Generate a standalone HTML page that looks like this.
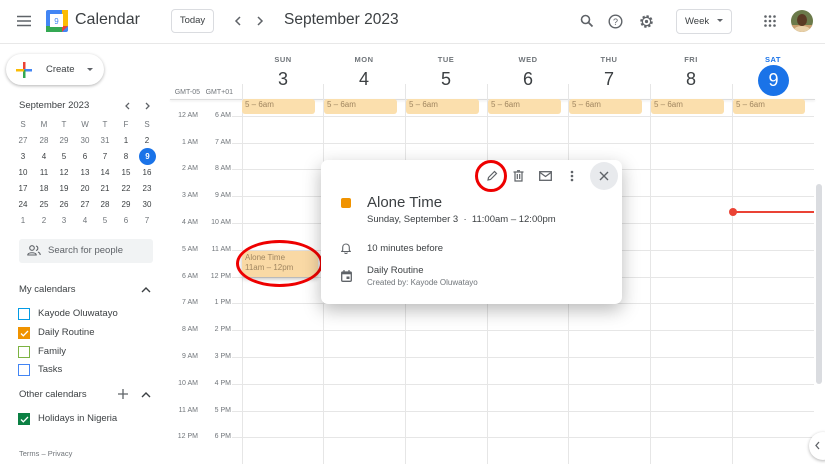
<!DOCTYPE html>
<html><head><meta charset="utf-8"><style>
*{box-sizing:border-box;margin:0;padding:0}
body{width:825px;height:464px;overflow:hidden;background:#fff;font-family:"Liberation Sans",Arial,sans-serif;color:#3c4043;position:relative}
.a{position:absolute}
.ic{position:absolute}
.mini span{position:absolute;width:20px;text-align:center;font-size:8px;color:#3c4043}
.lbl{position:absolute;font-size:7px;color:#70757a;text-align:right}
.hl{position:absolute;left:232px;width:582px;height:1px;background:#e6e6e6}
.vl{position:absolute;top:100px;width:1px;height:364px;background:#e6e6e6}
.ad{position:absolute;top:99px;height:15px;background:#fbdfad;border-radius:3px;font-size:8px;color:#a08660;padding:1px 3px}
.dn{position:absolute;top:55px;width:82px;text-align:center;font-size:7.5px;color:#70757a;font-weight:bold;letter-spacing:.5px}
.dd{position:absolute;top:69px;width:82px;text-align:center;font-size:18px;color:#3c4043}
.cb{position:absolute;left:18px;width:12px;height:12px;border:1.5px solid}
.cl{position:absolute;left:38px;font-size:9.5px;color:#3c4043}
</style></head><body>
<svg class="ic" style="left:17px;top:15px" width="14" height="12"><path d="M0 1.5h14M0 6h14M0 10.5h14" stroke="#5f6368" stroke-width="1.6"/></svg>
<svg class="ic" style="left:46px;top:10px" width="22" height="22" viewBox="0 0 22 22">
<rect x="0" y="0" width="22" height="22" rx="2" fill="#4285f4"/><rect x="16" y="0" width="6" height="16" fill="#fbbc04"/><rect x="0" y="16" width="16" height="6" fill="#34a853"/><path d="M16 16h6l-6 6z" fill="#ea4335"/><rect x="4" y="4" width="13" height="13" fill="#fff"/>
<text x="10.5" y="14" font-size="8" fill="#4285f4" text-anchor="middle" font-family="Liberation Sans">9</text></svg>
<div class="a" style="left:75px;top:11px;font-size:16px;color:#3c4043">Calendar</div>
<div class="a" style="left:171px;top:9px;width:43px;height:24px;border:1px solid #dadce0;border-radius:4px;font-size:9.5px;text-align:center;line-height:22px;color:#3c4043">Today</div>
<svg class="ic" style="left:234px;top:16px" width="8" height="10"><path d="M6 1L2 5l4 4" stroke="#5f6368" stroke-width="1.5" fill="none"/></svg>
<svg class="ic" style="left:256px;top:16px" width="8" height="10"><path d="M2 1l4 4-4 4" stroke="#5f6368" stroke-width="1.5" fill="none"/></svg>
<div class="a" style="left:284px;top:11px;font-size:15.5px;color:#3c4043">September 2023</div>
<svg class="ic" style="left:580px;top:14px" width="14" height="14"><circle cx="5.5" cy="5.5" r="4" stroke="#5f6368" stroke-width="1.6" fill="none"/><path d="M8.5 8.5l4 4" stroke="#5f6368" stroke-width="1.8"/></svg>
<svg class="ic" style="left:608px;top:14px" width="15" height="15"><circle cx="7.5" cy="7.5" r="6.3" stroke="#5f6368" stroke-width="1.4" fill="none"/><text x="7.5" y="11" font-size="9" text-anchor="middle" fill="#5f6368" font-family="Liberation Sans">?</text></svg>
<svg class="ic" style="left:639px;top:14px" width="15" height="15" viewBox="0 0 15 15"><circle cx="7.5" cy="7.5" r="5" stroke="#5f6368" stroke-width="2.6" stroke-dasharray="2.2 1.7" fill="none"/><circle cx="7.5" cy="7.5" r="4.2" stroke="#5f6368" stroke-width="1.3" fill="none"/><circle cx="7.5" cy="7.5" r="1.6" fill="#5f6368"/></svg>
<div class="a" style="left:676px;top:9px;width:56px;height:25px;border:1px solid #dadce0;border-radius:4px;font-size:9.5px;line-height:23px;padding-left:8px;color:#3c4043">Week</div>
<svg class="ic" style="left:717px;top:19px" width="6" height="4"><path d="M0 0h6L3 3z" fill="#5f6368"/></svg>
<svg class="ic" style="left:764px;top:15px" width="12" height="12"><g fill="#5f6368"><circle cx="1.5" cy="1.5" r="1.3"/><circle cx="6" cy="1.5" r="1.3"/><circle cx="10.5" cy="1.5" r="1.3"/><circle cx="1.5" cy="6" r="1.3"/><circle cx="6" cy="6" r="1.3"/><circle cx="10.5" cy="6" r="1.3"/><circle cx="1.5" cy="10.5" r="1.3"/><circle cx="6" cy="10.5" r="1.3"/><circle cx="10.5" cy="10.5" r="1.3"/></g></svg>
<svg class="ic" style="left:791px;top:10px" width="22" height="22"><defs><clipPath id="c"><circle cx="11" cy="11" r="11"/></clipPath></defs><g clip-path="url(#c)"><rect width="22" height="22" fill="#6b7a4a"/><rect y="15" width="22" height="7" fill="#c9a070"/><ellipse cx="11" cy="10" rx="5" ry="6" fill="#5a3a24"/><ellipse cx="11" cy="20" rx="8" ry="4" fill="#e8d0a8"/></g></svg>
<div class="a" style="left:0;top:43px;width:825px;height:1px;background:#e8e8e8"></div>

<div class="a" style="left:6px;top:54px;width:98px;height:31px;border-radius:16px;box-shadow:0 1px 3px rgba(0,0,0,.3);background:#fff"></div>
<svg class="ic" style="left:16px;top:62px" width="16" height="16"><rect x="7" y="0" width="2.5" height="8" fill="#ea4335"/><rect x="8" y="7" width="8" height="2.5" fill="#4285f4"/><rect x="7" y="8" width="2.5" height="8" fill="#34a853"/><rect x="0" y="7" width="8" height="2.5" fill="#fbbc04"/></svg>
<div class="a" style="left:46px;top:64px;font-size:9.5px;color:#3c4043">Create</div>
<svg class="ic" style="left:87px;top:68px" width="6" height="4"><path d="M0 0h6L3 3z" fill="#5f6368"/></svg>

<div class="a" style="left:19px;top:100px;font-size:9.5px;color:#3c4043">September 2023</div>
<svg class="ic" style="left:124px;top:102px" width="7" height="8"><path d="M5 1L2 4l3 3" stroke="#5f6368" stroke-width="1.3" fill="none"/></svg>
<svg class="ic" style="left:144px;top:102px" width="7" height="8"><path d="M2 1l3 3-3 3" stroke="#5f6368" stroke-width="1.3" fill="none"/></svg>
<div class="mini">
<span style="left:13px;top:120px;color:#70757a">S</span><span style="left:34px;top:120px;color:#70757a">M</span><span style="left:54px;top:120px;color:#70757a">T</span><span style="left:75px;top:120px;color:#70757a">W</span><span style="left:95px;top:120px;color:#70757a">T</span><span style="left:116px;top:120px;color:#70757a">F</span><span style="left:137px;top:120px;color:#70757a">S</span>
<span style="left:13px;top:136px;color:#70757a">27</span><span style="left:34px;top:136px;color:#70757a">28</span><span style="left:54px;top:136px;color:#70757a">29</span><span style="left:75px;top:136px;color:#70757a">30</span><span style="left:95px;top:136px;color:#70757a">31</span><span style="left:116px;top:136px">1</span><span style="left:137px;top:136px">2</span>
<span style="left:13px;top:152px">3</span><span style="left:34px;top:152px">4</span><span style="left:54px;top:152px">5</span><span style="left:75px;top:152px">6</span><span style="left:95px;top:152px">7</span><span style="left:116px;top:152px">8</span>
<span style="left:13px;top:168px">10</span><span style="left:34px;top:168px">11</span><span style="left:54px;top:168px">12</span><span style="left:75px;top:168px">13</span><span style="left:95px;top:168px">14</span><span style="left:116px;top:168px">15</span><span style="left:137px;top:168px">16</span>
<span style="left:13px;top:184px">17</span><span style="left:34px;top:184px">18</span><span style="left:54px;top:184px">19</span><span style="left:75px;top:184px">20</span><span style="left:95px;top:184px">21</span><span style="left:116px;top:184px">22</span><span style="left:137px;top:184px">23</span>
<span style="left:13px;top:200px">24</span><span style="left:34px;top:200px">25</span><span style="left:54px;top:200px">26</span><span style="left:75px;top:200px">27</span><span style="left:95px;top:200px">28</span><span style="left:116px;top:200px">29</span><span style="left:137px;top:200px">30</span>
<span style="left:13px;top:216px;color:#70757a">1</span><span style="left:34px;top:216px;color:#70757a">2</span><span style="left:54px;top:216px;color:#70757a">3</span><span style="left:75px;top:216px;color:#70757a">4</span><span style="left:95px;top:216px;color:#70757a">5</span><span style="left:116px;top:216px;color:#70757a">6</span><span style="left:137px;top:216px;color:#70757a">7</span>
</div>
<div class="a" style="left:139px;top:148px;width:17px;height:17px;border-radius:50%;background:#1a73e8;color:#fff;font-size:8px;font-weight:bold;text-align:center;line-height:17px">9</div>

<div class="a" style="left:19px;top:239px;width:134px;height:24px;background:#f1f3f4;border-radius:3px"></div>
<svg class="ic" style="left:27px;top:245px" width="14" height="11"><circle cx="5" cy="3" r="2.3" stroke="#5f6368" stroke-width="1.1" fill="none"/><path d="M0.8 10c0-3 8.4-3 8.4 0z" stroke="#5f6368" stroke-width="1.1" fill="none"/><path d="M9 1a2.3 2.3 0 010 4.5M11 7c1.5.6 2.2 1.5 2.2 3" stroke="#5f6368" stroke-width="1.1" fill="none"/></svg>
<div class="a" style="left:48px;top:245px;font-size:9.5px;color:#5f6368">Search for people</div>

<div class="a" style="left:19px;top:284px;font-size:9.5px;color:#3c4043">My calendars</div>
<svg class="ic" style="left:141px;top:286px" width="10" height="7"><path d="M1 6l4-4 4 4" stroke="#3c4043" stroke-width="1.4" fill="none"/></svg>
<div class="cb" style="top:308px;border-color:#039be5"></div><div class="cl" style="top:308px">Kayode Oluwatayo</div>
<div class="cb" style="top:327px;border-color:#f09300;background:#f09300"></div><svg class="ic" style="left:20px;top:330px" width="9" height="7"><path d="M1 3.5l2.3 2.3L8 1" stroke="#fff" stroke-width="1.3" fill="none"/></svg><div class="cl" style="top:327px">Daily Routine</div>
<div class="cb" style="top:346px;border-color:#7cb342"></div><div class="cl" style="top:346px">Family</div>
<div class="cb" style="top:364px;border-color:#4285f4"></div><div class="cl" style="top:364px">Tasks</div>
<div class="a" style="left:19px;top:389px;font-size:9.5px;color:#3c4043">Other calendars</div>
<svg class="ic" style="left:118px;top:389px" width="10" height="10"><path d="M5 0v10M0 5h10" stroke="#5f6368" stroke-width="1.3"/></svg>
<svg class="ic" style="left:141px;top:391px" width="10" height="7"><path d="M1 6l4-4 4 4" stroke="#3c4043" stroke-width="1.4" fill="none"/></svg>
<div class="cb" style="top:413px;border-color:#0b8043;background:#0b8043"></div><svg class="ic" style="left:20px;top:416px" width="9" height="7"><path d="M1 3.5l2.3 2.3L8 1" stroke="#fff" stroke-width="1.3" fill="none"/></svg><div class="cl" style="top:413px">Holidays in Nigeria</div>
<div class="a" style="left:19px;top:449px;font-size:7.5px;color:#70757a">Terms – Privacy</div>

<div class="dn" style="left:242px">SUN</div><div class="dd" style="left:242px">3</div>
<div class="dn" style="left:323px">MON</div><div class="dd" style="left:323px">4</div>
<div class="dn" style="left:405px">TUE</div><div class="dd" style="left:405px">5</div>
<div class="dn" style="left:487px">WED</div><div class="dd" style="left:487px">6</div>
<div class="dn" style="left:568px">THU</div><div class="dd" style="left:568px">7</div>
<div class="dn" style="left:650px">FRI</div><div class="dd" style="left:650px">8</div>
<div class="dn" style="left:732px;color:#1a73e8">SAT</div>
<div class="a" style="left:758px;top:65px;width:31px;height:31px;border-radius:50%;background:#1a73e8;color:#fff;font-size:18px;text-align:center;line-height:31px">9</div>
<div class="lbl" style="left:172px;top:89px;width:28px">GMT-05</div>
<div class="lbl" style="left:202px;top:89px;width:31px">GMT+01</div>
<div class="a" style="left:170px;top:99px;width:645px;height:1px;background:#ddd;box-shadow:0 1px 2px rgba(0,0,0,.12)"></div>

<div class="vl" style="left:242px;top:84px;height:380px"></div><div class="vl" style="left:323px;top:84px;height:380px"></div><div class="vl" style="left:405px;top:84px;height:380px"></div><div class="vl" style="left:487px;top:84px;height:380px"></div><div class="vl" style="left:568px;top:84px;height:380px"></div><div class="vl" style="left:650px;top:84px;height:380px"></div><div class="vl" style="left:732px;top:84px;height:380px"></div>

<div class="hl" style="top:116px"></div><div class="hl" style="top:143px"></div><div class="hl" style="top:169px"></div><div class="hl" style="top:196px"></div><div class="hl" style="top:223px"></div><div class="hl" style="top:250px"></div><div class="hl" style="top:277px"></div><div class="hl" style="top:303px"></div><div class="hl" style="top:330px"></div><div class="hl" style="top:357px"></div><div class="hl" style="top:384px"></div><div class="hl" style="top:411px"></div><div class="hl" style="top:437px"></div>

<div class="lbl" style="left:170px;top:112px;width:28px">12 AM</div><div class="lbl" style="left:200px;top:112px;width:31px">6 AM</div>
<div class="lbl" style="left:170px;top:139px;width:28px">1 AM</div><div class="lbl" style="left:200px;top:139px;width:31px">7 AM</div>
<div class="lbl" style="left:170px;top:165px;width:28px">2 AM</div><div class="lbl" style="left:200px;top:165px;width:31px">8 AM</div>
<div class="lbl" style="left:170px;top:192px;width:28px">3 AM</div><div class="lbl" style="left:200px;top:192px;width:31px">9 AM</div>
<div class="lbl" style="left:170px;top:219px;width:28px">4 AM</div><div class="lbl" style="left:200px;top:219px;width:31px">10 AM</div>
<div class="lbl" style="left:170px;top:246px;width:28px">5 AM</div><div class="lbl" style="left:200px;top:246px;width:31px">11 AM</div>
<div class="lbl" style="left:170px;top:273px;width:28px">6 AM</div><div class="lbl" style="left:200px;top:273px;width:31px">12 PM</div>
<div class="lbl" style="left:170px;top:299px;width:28px">7 AM</div><div class="lbl" style="left:200px;top:299px;width:31px">1 PM</div>
<div class="lbl" style="left:170px;top:326px;width:28px">8 AM</div><div class="lbl" style="left:200px;top:326px;width:31px">2 PM</div>
<div class="lbl" style="left:170px;top:353px;width:28px">9 AM</div><div class="lbl" style="left:200px;top:353px;width:31px">3 PM</div>
<div class="lbl" style="left:170px;top:380px;width:28px">10 AM</div><div class="lbl" style="left:200px;top:380px;width:31px">4 PM</div>
<div class="lbl" style="left:170px;top:407px;width:28px">11 AM</div><div class="lbl" style="left:200px;top:407px;width:31px">5 PM</div>
<div class="lbl" style="left:170px;top:433px;width:28px">12 PM</div><div class="lbl" style="left:200px;top:433px;width:31px">6 PM</div>

<div class="ad" style="left:242px;width:73px">5 – 6am</div><div class="ad" style="left:324px;width:73px">5 – 6am</div><div class="ad" style="left:406px;width:73px">5 – 6am</div><div class="ad" style="left:488px;width:73px">5 – 6am</div><div class="ad" style="left:569px;width:73px">5 – 6am</div><div class="ad" style="left:651px;width:73px">5 – 6am</div><div class="ad" style="left:733px;width:72px">5 – 6am</div>

<div class="a" style="left:242px;top:251px;width:76px;height:26px;background:#f9d9a5;border-radius:3px;box-shadow:0 2px 4px rgba(0,0,0,.25);font-size:8px;color:#a08660;padding:2px 3px;line-height:10px">Alone Time<br>11am – 12pm</div>
<div class="a" style="left:236px;top:240px;width:87px;height:47px;border:3.5px solid #e00;border-radius:50%"></div>

<div class="a" style="left:732px;top:211px;width:82px;height:1.5px;background:#ea4335"></div>
<div class="a" style="left:729px;top:208px;width:8px;height:8px;border-radius:50%;background:#ea4335"></div>

<div class="a" style="left:816px;top:184px;width:6px;height:200px;background:#dadce0;border-radius:3px"></div>
<div class="a" style="left:809px;top:432px;width:28px;height:28px;border-radius:50%;background:#fff;box-shadow:0 1px 3px rgba(0,0,0,.3)"></div>
<svg class="ic" style="left:814px;top:441px" width="7" height="9"><path d="M5 1L2 4.5 5 8" stroke="#5f6368" stroke-width="1.3" fill="none"/></svg>

<div class="a" style="left:321px;top:160px;width:301px;height:144px;background:#fff;border-radius:7px;box-shadow:0 6px 18px rgba(0,0,0,.28)"></div>
<svg class="ic" style="left:486px;top:170px" width="12" height="12"><path d="M2 10l.5-2.5L8.5 1.5l2 2L4.5 9.5z" stroke="#5f6368" stroke-width="1.2" fill="none"/></svg>
<div class="a" style="left:475px;top:160px;width:32px;height:32px;border:3.5px solid #e00;border-radius:50%"></div>
<svg class="ic" style="left:513px;top:170px" width="11" height="12"><path d="M0.5 2h10M4 0.7h3M2 2v9h7V2M4.3 4v5M6.7 4v5" stroke="#5f6368" stroke-width="1.2" fill="none"/></svg>
<svg class="ic" style="left:539px;top:171px" width="13" height="10"><rect x="0.7" y="0.7" width="11.6" height="8.6" stroke="#5f6368" stroke-width="1.3" fill="none"/><path d="M1 1.5l5.5 4 5.5-4" stroke="#5f6368" stroke-width="1.2" fill="none"/></svg>
<svg class="ic" style="left:570px;top:170px" width="4" height="12"><g fill="#5f6368"><circle cx="2" cy="2" r="1.3"/><circle cx="2" cy="6" r="1.3"/><circle cx="2" cy="10" r="1.3"/></g></svg>
<div class="a" style="left:590px;top:162px;width:28px;height:28px;border-radius:50%;background:#e8eaed"></div>
<svg class="ic" style="left:599px;top:171px" width="10" height="10"><path d="M1 1l8 8M9 1L1 9" stroke="#5f6368" stroke-width="1.4"/></svg>
<div class="a" style="left:341px;top:198px;width:10px;height:10px;border-radius:2px;background:#f09300"></div>
<div class="a" style="left:367px;top:194px;font-size:15px;color:#3c4043">Alone Time</div>
<div class="a" style="left:367px;top:214px;font-size:9.5px;color:#3c4043">Sunday, September 3 &nbsp;·&nbsp; 11:00am – 12:00pm</div>
<svg class="ic" style="left:341px;top:243px" width="10" height="11"><path d="M5 1c-2.3 0-3.3 1.7-3.3 3.5v2.8L.7 8.5h8.6L8.3 7.3V4.5C8.3 2.7 7.3 1 5 1zM3.8 9.5a1.2 1.2 0 002.4 0" stroke="#5f6368" stroke-width="1.1" fill="none"/></svg>
<div class="a" style="left:367px;top:243px;font-size:9.5px;color:#3c4043">10 minutes before</div>
<svg class="ic" style="left:341px;top:270px" width="11" height="12"><rect x="0.7" y="2" width="9.6" height="9.3" rx="1" stroke="#5f6368" stroke-width="1.3" fill="none"/><rect x="0.7" y="2" width="9.6" height="2.3" fill="#5f6368"/><path d="M3 0v2.5M8 0v2.5" stroke="#5f6368" stroke-width="1.2"/><rect x="5.5" y="6.5" width="3" height="2.5" fill="#5f6368"/></svg>
<div class="a" style="left:367px;top:265px;font-size:9.5px;color:#3c4043">Daily Routine</div>
<div class="a" style="left:367px;top:278px;font-size:8px;color:#70757a">Created by: Kayode Oluwatayo</div>
</body></html>
